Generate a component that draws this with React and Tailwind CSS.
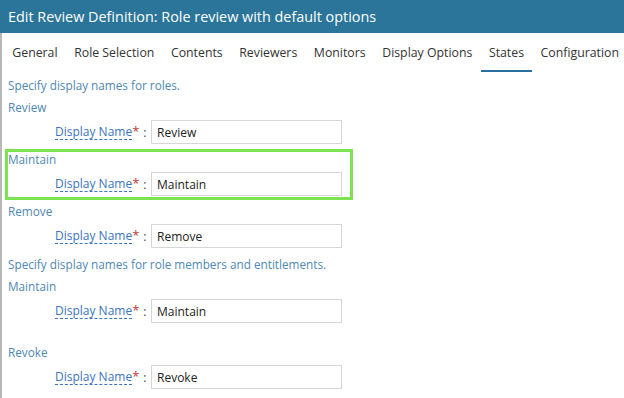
import React from 'react';

const tabs = ['General', 'Role Selection', 'Contents', 'Reviewers', 'Monitors', 'Display Options', 'States', 'Configuration'];

const NameRow = ({ value }) => (
    <div className="flex items-center mt-[3px] h-6">
        <div className="w-[143px] pl-[47px] flex items-center text-[12px]">
            <span className="text-[#3a74c2] border-b border-dashed border-[#3a74c2] leading-[15px]">Display Name</span>
            <span className="text-[#c0392b] text-[13px] leading-[15px] -mt-[2px]">*</span>
            <span className="text-[#444] ml-[4px] leading-[15px]">:</span>
        </div>
        <input
            type="text"
            defaultValue={value}
            className="w-[191px] h-6 border border-[#d6d6d6] bg-white px-[5px] text-[12px] text-[#222] focus:outline-none"
        />
    </div>
);

const Group = ({ label, value, highlight, className = '' }) => (
    <div className={'relative pb-[5px] ' + className}>
        <div className="text-[#4f88b3] leading-5">{label}</div>
        <NameRow value={value} />
        {highlight && (
            <span className="absolute top-0 left-[-3px] w-[348px] h-[51px] border-[3px] border-[#7de34f] pointer-events-none"></span>
        )}
    </div>
);

export default function App() {
    return (
        <div className="w-[624px] h-[398px] overflow-hidden bg-white" style={{ fontFamily: '"Open Sans", "Liberation Sans", sans-serif' }}>
            <div className="h-[33px] bg-[#2a7599] flex items-center px-2">
                <span className="text-white text-[14.4px] whitespace-nowrap">Edit Review Definition: Role review with default options</span>
            </div>
            <div className="border-l-2 border-[#b8b8b8] h-[365px]">
                <div className="flex pl-[2px] whitespace-nowrap">
                    {tabs.map((t) => (
                        <div
                            key={t}
                            className={'px-[8.3px] pt-[10px] pb-[7px] text-[12.3px] leading-5 text-[#333] border-b-2 ' + (t === 'States' ? 'border-[#2a6fa0]' : 'border-transparent')}
                        >
                            {t}
                        </div>
                    ))}
                </div>
                <div className="pl-[6px] pt-[3px] text-[11.75px]">
                    <div className="text-[#4f88b3] leading-5 mb-[2px]">Specify display names for roles.</div>
                    <Group label="Review" value="Review" />
                    <Group label="Maintain" value="Maintain" highlight />
                    <Group label="Remove" value="Remove" />
                    <div className="text-[#4f88b3] leading-5 mt-[1px] mb-[2px]">Specify display names for role members and entitlements.</div>
                    <Group label="Maintain" value="Maintain" />
                    <Group label="Revoke" value="Revoke" className="mt-[14px]" />
                </div>
            </div>
        </div>
    );
}
